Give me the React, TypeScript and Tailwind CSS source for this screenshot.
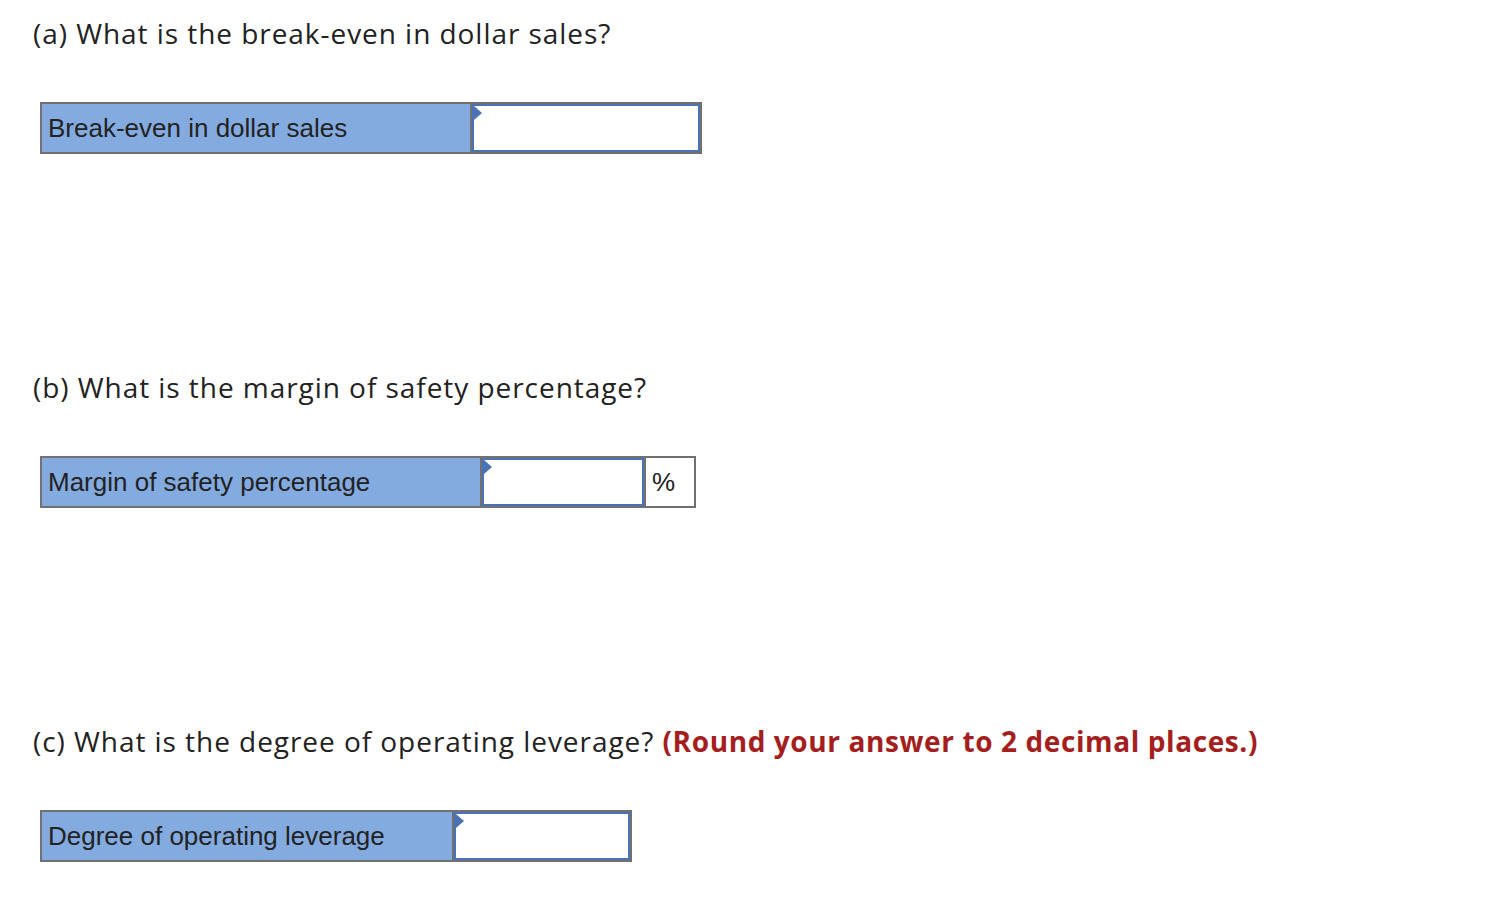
import React from "react";

function Marker() {
  return (
    <span className="absolute left-0 top-0 w-0 h-0 border-t-[7px] border-b-[7px] border-l-[8px] border-t-transparent border-b-transparent border-l-[#4a72b5]" />
  );
}

function Row({ label, labelW, inputW, pct }: { label: string; labelW: number; inputW: number; pct?: boolean }) {
  return (
    <div className="flex border-2 border-[#717171] h-[52px] w-fit">
      <div
        className="bg-[#84abe0] flex items-center pl-[6px] text-[26px] text-[#222] font-['Liberation_Sans',Arial,sans-serif] border-r-2 border-[#717171]"
        style={{ width: labelW + 2 }}
      >
        {label}
      </div>
      <div className="relative border-2 border-[#4a72b5] bg-white" style={{ width: inputW }}>
        <Marker />
      </div>
      {pct && (
        <div className="w-[50px] border-l-2 border-[#717171] flex items-center pl-[6px] text-[26px] text-[#222] font-['Liberation_Sans',Arial,sans-serif]">
          %
        </div>
      )}
    </div>
  );
}

export default function App() {
  const q = "text-[28px] leading-[36px] tracking-[0.95px] text-[#222] font-['Open_Sans',sans-serif] ml-[33px]";
  return (
    <div className="bg-white w-[1490px] h-[918px] pt-[15px]">
      <div className={q}>(a) What is the break-even in dollar sales?</div>
      <div className="ml-[40px] mt-[51px]">
        <Row label="Break-even in dollar sales" labelW={428} inputW={228} />
      </div>
      <div className={q + " mt-[215px]"}>(b) What is the margin of safety percentage?</div>
      <div className="ml-[40px] mt-[51px]">
        <Row label="Margin of safety percentage" labelW={438} inputW={162} pct />
      </div>
      <div className={q + " mt-[215px]"}>
        (c) What is the degree of operating leverage?{" "}
        <span className="font-bold tracking-[0.6px] text-[#a51e1e]">(Round your answer to 2 decimal places.)</span>
      </div>
      <div className="ml-[40px] mt-[51px]">
        <Row label="Degree of operating leverage" labelW={410} inputW={176} />
      </div>
    </div>
  );
}
